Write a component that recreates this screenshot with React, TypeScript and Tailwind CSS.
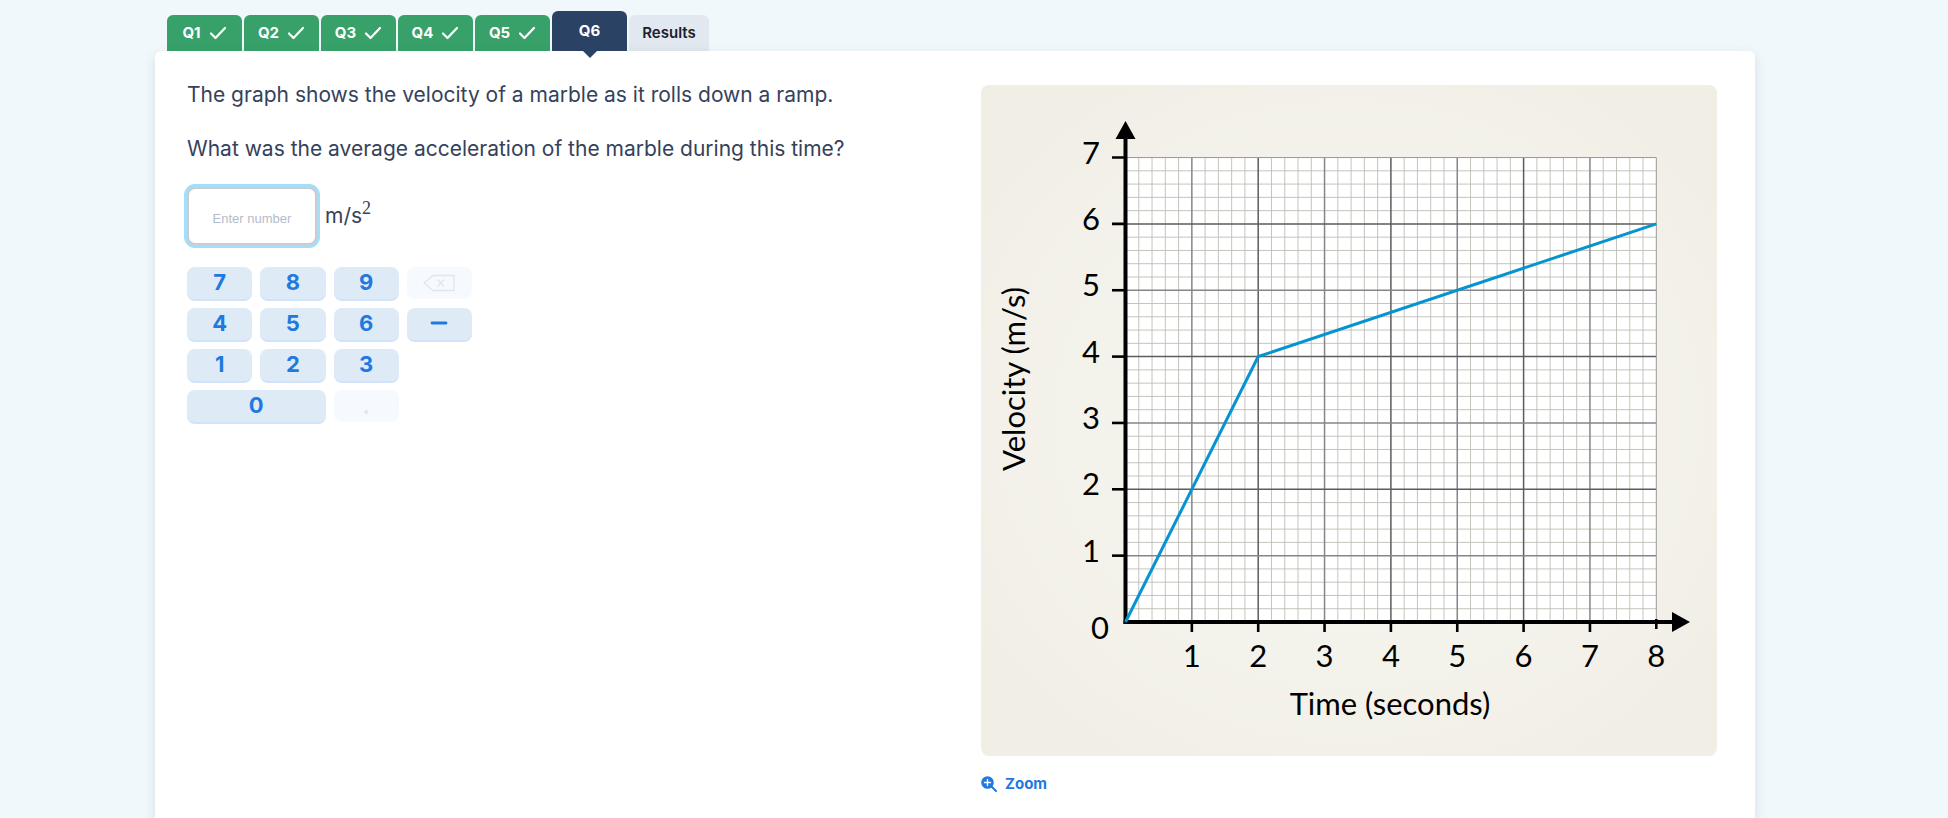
import type { ReactNode } from "react";

const answered = ["Q1", "Q2", "Q3", "Q4", "Q5"];

const X0 = 144.5;
const Y0 = 537;
const UNIT = 66.35;

const gx = (v: number) => X0 + v * UNIT;
const gy = (v: number) => Y0 - v * UNIT;

function Tick() {
  return (
    <svg viewBox="0 0 18 14" className="w-[18px] h-[14px]" fill="none" stroke="currentColor" strokeWidth="2.2" strokeLinecap="round" strokeLinejoin="round" aria-hidden="true">
      <path d="M2 7.5 6.500 12 16 2" />
    </svg>
  );
}

function Key({ children, label, wide, disabled }: { children: ReactNode; label: string; wide?: boolean; disabled?: boolean }) {
  return (
    <button
      type="button"
      aria-label={label}
      disabled={disabled}
      className={`flex items-center justify-center rounded-lg font-bold text-[22px] leading-none ${wide ? "col-span-2" : ""} ${
        disabled ? "h-8 bg-[#f6f9fe] text-[#e1e6ed]" : "h-[34px] pb-0.5 bg-[#deebf7] text-[#2079e0] border-b-2 border-[#d0e3f8]"
      }`}
    >
      {children}
    </button>
  );
}

function Graph() {
  const minorX = Array.from({ length: 40 }, (_, i) => i + 1).filter((i) => i % 5 !== 0);
  const minorY = Array.from({ length: 35 }, (_, i) => i + 1).filter((i) => i % 5 !== 0);

  return (
    <svg viewBox="0 0 736 671" className="block w-full rounded-lg" role="img" aria-label="Velocity-time graph">
      <defs>
        <radialGradient id="paper" cx="50%" cy="50%" r="60%">
          <stop offset="0" stopColor="#f6f6ef" />
          <stop offset="0.6" stopColor="#f4f3eb" />
          <stop offset="1" stopColor="#f1eee6" />
        </radialGradient>
      </defs>
      <rect width="736" height="671" fill="url(#paper)" />
      <rect x={gx(0)} y={gy(7)} width={UNIT * 8} height={UNIT * 7} fill="#fff" />

      <g stroke="#bdbdb6" strokeWidth="0.9">
        {minorX.map((i) => (
          <path key={i} d={`M${gx(i / 5)} ${gy(0)}V${gy(7)}`} />
        ))}
        {minorY.map((i) => (
          <path key={i} d={`M${gx(0)} ${gy(i / 5)}H${gx(8)}`} />
        ))}
      </g>
      <g strokeWidth="1.5">
        {[1, 2, 3, 4, 5, 6, 7].map((v) => (
          <path key={v} d={`M${gx(v)} ${gy(0)}V${gy(7)}`} stroke={v % 2 ? "#868686" : "#5c5c5c"} />
        ))}
        {[1, 2, 3, 4, 5, 6].map((v) => (
          <path key={v} d={`M${gx(0)} ${gy(v)}H${gx(8)}`} stroke={v % 2 ? "#868686" : "#5c5c5c"} />
        ))}
      </g>
      <path d={`M${gx(0)} ${gy(7)}H${gx(8)}V${gy(0)}`} fill="none" stroke="#999" />

      <g stroke="#000" strokeWidth="4">
        <path d={`M${X0} ${Y0 + 2}V50`} />
        <path d={`M${X0 - 2} ${Y0}H695`} />
      </g>
      <path d="M144.5 36 154.5 54H134.5Z" />
      <path d="M709 537 691 527V547Z" />
      <g stroke="#000" strokeWidth="2.6">
        {[1, 2, 3, 4, 5, 6, 7].map((v) => (
          <path key={v} d={`M131 ${gy(v)}H${X0}`} />
        ))}
        {[1, 2, 3, 4, 5, 6, 7].map((v) => (
          <path key={v} d={`M${gx(v)} ${Y0}V547`} />
        ))}
        <path d={`M${gx(8)} 534V544`} />
      </g>

      <path d={`M${gx(0)} ${gy(0)}L${gx(2)} ${gy(4)} ${gx(8)} ${gy(6)}`} fill="none" stroke="#0594d1" strokeWidth="3" />

      <g className="font-['Lato',sans-serif] text-[31px]">
        {[1, 2, 3, 4, 5, 6, 7].map((v) => (
          <text key={v} x="110" y={gy(v) + 6} textAnchor="middle">
            {v}
          </text>
        ))}
        {[1, 2, 3, 4, 5, 6, 7, 8].map((v) => (
          <text key={v} x={gx(v)} y="582" textAnchor="middle">
            {v}
          </text>
        ))}
        <text x="119" y="554" textAnchor="middle">0</text>
        <text x="409" y="630" textAnchor="middle">Time (seconds)</text>
        <text transform="translate(44 294) rotate(-90)" textAnchor="middle">Velocity (m/s)</text>
      </g>
    </svg>
  );
}

export default function App() {
  return (
    <div className="min-h-screen flex flex-col bg-[#f0f8fb] pr-[38px] font-['Inter',sans-serif] text-[#36415a]">
      <div className="w-full max-w-[1600px] mx-auto flex-1 flex flex-col">
        <nav className="flex items-end gap-0.5 pl-3 pt-[11px] text-[15px] font-bold text-white">
          {answered.map((q) => (
            <button key={q} type="button" className="w-[75px] h-9 flex items-center justify-center gap-2 rounded-t-md bg-[#38a169]">
              {q}
              <Tick />
            </button>
          ))}
          <button type="button" aria-current="step" className="relative w-[75px] h-10 flex items-center justify-center rounded-t-md bg-[#2a4365]">
            Q6
            <span className="absolute top-full left-1/2 -translate-x-1/2 border-x-[7px] border-t-[7px] border-x-transparent border-t-[#2a4365]" />
          </button>
          <button type="button" className="w-20 h-9 flex items-center justify-center rounded-t-md bg-[#e2e8f0] text-[#1a202c] font-semibold">
            Results
          </button>
        </nav>

        <main className="flex-1 grid grid-cols-[1fr_736px] gap-x-8 rounded-t-md bg-white pl-8 pr-[38px] shadow-[0_4px_12px_rgba(40,70,90,0.14)]">
          <section className="pt-7 text-[21px] leading-8">
            <p>The graph shows the velocity of a marble as it rolls down a ramp.</p>
            <p className="mt-[22px]">What was the average acceleration of the marble during this time?</p>

            <div className="mt-[22px] flex items-center gap-2">
              <input
                id="answer"
                type="text"
                placeholder="Enter number"
                aria-label="Acceleration in metres per second squared"
                className="w-[130px] h-[58px] pt-1 rounded-lg border-2 border-[#ccc] bg-white text-center text-[13px] font-['Liberation_Sans',sans-serif] outline-none ring-[3px] ring-[#a3dffd] placeholder:text-[#b4bccb]"
              />
              <label htmlFor="answer">
                m/s<sup className="font-['Liberation_Serif',serif] text-lg leading-none">2</sup>
              </label>
            </div>

            <div className="mt-[22px] w-[285px] grid grid-cols-4 gap-x-2 gap-y-[7px]">
              <Key label="7">7</Key>
              <Key label="8">8</Key>
              <Key label="9">9</Key>
              <Key label="Backspace" disabled>
                <svg viewBox="0 0 32 18" className="w-8 h-[18px]" fill="none" stroke="currentColor" strokeWidth="1.3" aria-hidden="true">
                  <path d="M10 1.500H31V16.500H10L1 9Z" />
                  <path d="M14.500 5.500 21 12.500M21 5.500 14.500 12.500" />
                </svg>
              </Key>
              <Key label="4">4</Key>
              <Key label="5">5</Key>
              <Key label="6">6</Key>
              <Key label="Minus">
                <svg viewBox="0 0 18 4" className="w-[18px] h-1" stroke="currentColor" strokeWidth="2.8" strokeLinecap="round" aria-hidden="true">
                  <path d="M2 2H16" />
                </svg>
              </Key>
              <Key label="1">1</Key>
              <Key label="2">2</Key>
              <Key label="3">3</Key>
              <span />
              <Key label="0" wide>0</Key>
              <Key label="Decimal point" disabled>.</Key>
            </div>
          </section>

          <section className="pt-[34px]">
            <Graph />
            <button type="button" className="mt-4 flex items-center gap-2 text-[15px] leading-6 font-bold text-[#2079e0]">
              <svg viewBox="0 0 16 16" className="w-4 h-4" fill="none" aria-hidden="true">
                <circle cx="6.500" cy="6.500" r="6.300" fill="currentColor" />
                <path d="M10.500 10.500 15 15" stroke="currentColor" strokeWidth="2" strokeLinecap="round" />
                <path d="M6.500 3.500V9.500M3.500 6.500H9.500" stroke="#fff" strokeWidth="1.4" strokeLinecap="round" />
              </svg>
              Zoom
            </button>
          </section>
        </main>
      </div>
    </div>
  );
}
